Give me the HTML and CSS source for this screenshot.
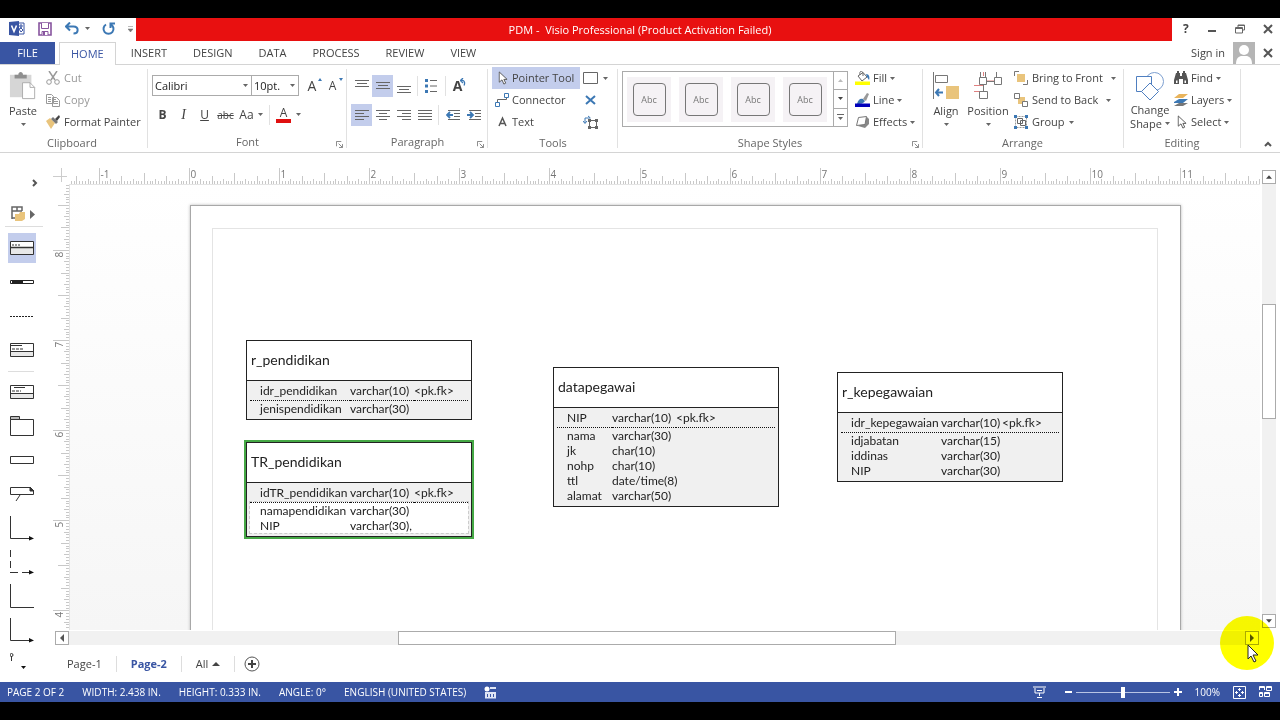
FILE: index.html
```
<!DOCTYPE html>
<html lang="en">
  <head>
    <meta charset="UTF-8" />
    <meta name="viewport" content="width=device-width, initial-scale=1.0" />
    <title>PDM - Visio Professional</title>
    <link rel="stylesheet" href="styles.css">
  </head>
  <body>
    <!-- shared shapes -->
    <svg class="sprite" aria-hidden="true">
      <symbol id="down" viewBox="0 0 5 3"><path d="M0 0h5L2.500 3z" fill="currentColor" /></symbol>
      <symbol id="launcher" viewBox="0 0 8 8"><path d="M.5 6V.5H6M3 3l4 4M7.500 3.500v4h-4" fill="none" stroke="#777" /></symbol>
      <symbol id="close" viewBox="0 0 10 10"><path d="M1 1l8 8M9 1L1 9" fill="none" stroke="#555" stroke-width="2" /></symbol>
      <symbol id="arrow" viewBox="0 0 10 15"><path d="M1 1v11l3-2.500 2 4.500 2-1-2-4h3.500z" fill="#fff" stroke="#555" /></symbol>
    </svg>

    <header class="titlebar">
      <div class="quick">
        <svg class="visio" width="16" height="15" viewBox="0 0 16 15"><path d="M9 2h6v11H9z" fill="#fff" stroke="#3955a3" /><path d="M11 4h2v2h-2zM10 8l2-1 2 2-2 2zM12 6v2" fill="none" stroke="#3955a3" /><path d="M0 1l10-1v15L0 14z" fill="#3955a3" /><path d="M2.500 4.500L5 10.500l2.500-6" fill="none" stroke="#fff" stroke-width="1.600" /></svg>
        <button class="plain" aria-label="Save"><svg width="14" height="14" viewBox="0 0 14 14"><path d="M1 1h12v12H1z" fill="none" stroke="#87549e" stroke-width="1.600" /><path d="M3.500 1v5.500h7V1M4 13V9.500h6V13" fill="#fff" stroke="#87549e" /><path d="M5 10h2v3H5z" fill="#87549e" /></svg></button>
        <button class="plain" aria-label="Undo"><svg width="14" height="13" viewBox="0 0 14 13"><path d="M1 4.500h7.500c5.500 0 5.500 7 0 7M5 .5l-4 4 4 4" fill="none" stroke="#3c78b4" stroke-width="2" /></svg><svg class="tri" width="5" height="3"><use href="#down" /></svg></button>
        <button class="plain" aria-label="Repeat"><svg width="13" height="13" viewBox="0 0 13 13"><path d="M4 2.500a5 5 0 1 0 5 0M8.500 6V1.500H13" fill="none" stroke="#3c78b4" stroke-width="2" /></svg></button>
        <button class="plain" aria-label="Customize"><svg width="5" height="6" viewBox="0 0 5 6"><path d="M0 .5h5M0 3h5L2.500 6z" fill="#777" stroke="#777" stroke-width=".5" /></svg></button>
      </div>
      <h1 class="title">PDM -&nbsp; Visio Professional (Product Activation Failed)</h1>
      <div class="window-buttons">
        <button class="plain help" aria-label="Help">?</button>
        <button class="plain" aria-label="Minimize"><svg width="10" height="10" viewBox="0 0 10 10"><path d="M1 7h8" stroke="#555" stroke-width="2" /></svg></button>
        <button class="plain" aria-label="Restore"><svg width="10" height="10" viewBox="0 0 10 10"><path d="M3 3V1h6.500v5h-2M.5 3.500h7v5.500h-7zM.5 4.500h7M3 1.500h6" fill="none" stroke="#666" /></svg></button>
        <button class="plain" aria-label="Close"><svg width="10" height="10"><use href="#close" /></svg></button>
      </div>
    </header>

    <nav class="tabs">
      <a class="file" href="#">FILE</a>
      <a class="active" href="#">HOME</a>
      <a href="#">INSERT</a>
      <a href="#">DESIGN</a>
      <a href="#">DATA</a>
      <a href="#">PROCESS</a>
      <a href="#">REVIEW</a>
      <a href="#">VIEW</a>
      <div class="account">
        <a href="#">Sign in</a>
        <svg width="22" height="22" viewBox="0 0 22 22"><path d="M0 0h22v22H0z" fill="#b5b5b5" /><circle cx="11" cy="8" r="5" fill="#fff" /><path d="M3 22c0-6 3-8 6-8h4c3 0 6 2 6 8z" fill="#fff" /></svg>
        <button class="plain" aria-label="Close document"><svg width="10" height="10"><use href="#close" /></svg></button>
      </div>
    </nav>

    <div class="ribbon">
      <section class="group clipboard">
        <div class="body">
          <button class="big muted-icon">
            <svg width="28" height="30" viewBox="0 0 28 30"><path d="M0 3h23v24H0z" fill="#d6d6d6" /><path d="M5 7V3h4c0-4 5-4 5 0h4v4z" fill="#8f8f8f" /><path d="M13.500 11.500h8l5 5v12h-13z" fill="#fff" stroke="#aaa" /><path d="M21.500 11.500v5h5" fill="none" stroke="#aaa" /></svg>
            <span>Paste</span><svg class="tri" width="5" height="3"><use href="#down" /></svg>
          </button>
          <div class="rows">
            <button class="tool disabled"><svg width="14" height="14" viewBox="0 0 14 14"><path d="M3 0l6 9M11 0L5 9" stroke="#999" stroke-width="1.500" /><circle cx="3" cy="11" r="2.300" fill="none" stroke="#999" /><circle cx="11" cy="11" r="2.300" fill="none" stroke="#999" /></svg>Cut</button>
            <button class="tool disabled"><svg width="14" height="14" viewBox="0 0 14 14"><path d="M.5 1.500h5l2 2v7h-7zM6.500 4.500h4l3 3v6h-7z" fill="#fff" stroke="#999" /><path d="M2 4.500h3M2 6.500h3M2 8.500h3M8 8.500h4M8 10.500h4M8 6.500h2" stroke="#999" /></svg>Copy</button>
            <button class="tool"><svg width="14" height="14" viewBox="0 0 14 14"><path d="M0 6l4-3 5 5-4 6z" fill="#e9c47c" /><path d="M5 4l2-2 5 5-2 2z" fill="#777" /><path d="M9 4l4-4 1 2-3 4z" fill="#444" /></svg>Format Painter</button>
          </div>
        </div>
        <h2>Clipboard</h2>
      </section>

      <section class="group font">
        <div class="body lines">
          <div class="line">
            <label class="combo family"><select aria-label="Font"><option>Calibri</option></select><svg class="tri" width="5" height="3"><use href="#down" /></svg></label>
            <label class="combo size"><select aria-label="Font size"><option>10pt.</option></select><svg class="tri" width="5" height="3"><use href="#down" /></svg></label>
            <button class="letter grow" aria-label="Increase font size">A<svg width="4" height="3" viewBox="0 0 4 3"><path d="M0 3h4L2 0z" fill="#3c78b4" /></svg></button>
            <button class="letter shrink" aria-label="Decrease font size">A<svg width="4" height="3" viewBox="0 0 4 3"><path d="M0 0h4L2 3z" fill="#3c78b4" /></svg></button>
          </div>
          <div class="line">
            <button class="letter"><b>B</b></button>
            <button class="letter serif"><i>I</i></button>
            <button class="letter"><u>U</u></button>
            <button class="letter small"><s>abc</s></button>
            <button class="letter case">Aa<svg class="tri" width="5" height="3"><use href="#down" /></svg></button>
            <span class="rule"></span>
            <button class="letter color"><span>A</span><svg class="tri" width="5" height="3"><use href="#down" /></svg></button>
          </div>
        </div>
        <h2>Font</h2>
        <svg class="launcher" width="7" height="7"><use href="#launcher" /></svg>
      </section>

      <section class="group paragraph">
        <div class="body lines">
          <div class="line">
            <button class="ico" aria-label="Align top"><svg width="14" height="14" viewBox="0 0 14 14"><path d="M0 1.500h14M2 4.500h10M0 7.500h14" stroke="#666" /></svg></button>
            <button class="ico on" aria-label="Align middle"><svg width="14" height="14" viewBox="0 0 14 14"><path d="M0 3.500h14M2 6.500h10M0 9.500h14" stroke="#666" /></svg></button>
            <button class="ico" aria-label="Align bottom"><svg width="14" height="14" viewBox="0 0 14 14"><path d="M0 7.500h14M2 10.500h10M0 13.500h14" stroke="#666" /></svg></button>
            <span class="rule"></span>
            <button class="ico" aria-label="Bullets"><svg width="14" height="14" viewBox="0 0 14 14"><path d="M5 1.500h7M5 7h7M5 12.500h7" stroke="#666" /><path d="M0 0h3v3H0zM0 5.500h3v3H0zM0 11h3v3H0z" fill="#3c78b4" /></svg></button>
            <span class="rule"></span>
            <button class="letter rotate" aria-label="Rotate text"><b>A</b><svg width="6" height="8" viewBox="0 0 6 8"><path d="M1 2.500c4-1 4 3 3 5M3 0L.5 2.500 3 5" fill="none" stroke="#3c78b4" stroke-width="1.300" /></svg></button>
          </div>
          <div class="line">
            <button class="ico on" aria-label="Align left"><svg width="14" height="14" viewBox="0 0 14 14"><path d="M0 2.500h14M0 5.500h9M0 8.500h14M0 11.500h9" stroke="#666" /></svg></button>
            <button class="ico" aria-label="Center"><svg width="14" height="14" viewBox="0 0 14 14"><path d="M0 2.500h14M3 5.500h8M0 8.500h14M3 11.500h8" stroke="#666" /></svg></button>
            <button class="ico" aria-label="Align right"><svg width="14" height="14" viewBox="0 0 14 14"><path d="M0 2.500h14M5 5.500h9M0 8.500h14M5 11.500h9" stroke="#666" /></svg></button>
            <button class="ico" aria-label="Justify"><svg width="14" height="14" viewBox="0 0 14 14"><path d="M0 2.500h14M0 5.500h14M0 8.500h14M0 11.500h14" stroke="#666" /></svg></button>
            <span class="rule"></span>
            <button class="ico" aria-label="Decrease indent"><svg width="14" height="14" viewBox="0 0 14 14"><path d="M2 2.500h12M8 5.500h6M8 8.500h6M2 11.500h12" stroke="#666" /><path d="M7 7H1M4 4L1 7l3 3" fill="none" stroke="#3c78b4" stroke-width="1.800" /></svg></button>
            <button class="ico" aria-label="Increase indent"><svg width="14" height="14" viewBox="0 0 14 14"><path d="M2 2.500h12M8 5.500h6M8 8.500h6M2 11.500h12" stroke="#666" /><path d="M0 7h6M3 4l3 3-3 3" fill="none" stroke="#3c78b4" stroke-width="1.800" /></svg></button>
          </div>
        </div>
        <h2>Paragraph</h2>
        <svg class="launcher" width="7" height="7"><use href="#launcher" /></svg>
      </section>

      <section class="group tools">
        <div class="body">
          <div class="rows">
            <button class="tool on"><svg width="14" height="14" viewBox="-3 0 14 15"><use href="#arrow" width="10" height="15" /></svg>Pointer Tool</button>
            <button class="tool"><svg width="14" height="14" viewBox="0 0 14 14"><path d="M.5 9.500h4v4h-4zM9.500.5h4v4h-4z" fill="#fff" stroke="#3c78b4" /><path d="M2.500 9V6.500h9V5" fill="none" stroke="#666" /></svg>Connector</button>
            <button class="tool"><svg width="14" height="14" viewBox="0 0 14 14"><path d="M4 11L7.500 3 11 11M5 8.500h5" fill="none" stroke="#555" stroke-width="1.500" /></svg>Text</button>
          </div>
          <div class="rows shapes-col">
            <button class="tool" aria-label="Rectangle"><svg width="15" height="12" viewBox="0 0 15 12"><path d="M.5.5h14v11H.5z" fill="#fff" stroke="#666" /></svg><svg class="tri" width="5" height="3"><use href="#down" /></svg></button>
            <button class="tool" aria-label="Connection point"><svg width="15" height="10" viewBox="0 0 15 10"><path d="M3 1l9 8M12 1L3 9" stroke="#3c78b4" stroke-width="2" /></svg></button>
            <button class="tool" aria-label="Text block"><svg width="15" height="14" viewBox="0 0 15 14"><path d="M6.500 5.500h7v7h-7z" fill="none" stroke="#666" /><path d="M5 4h3v3H5zM12 4h3v3h-3zM5 11h3v3H5zM12 11h3v3h-3z" fill="#666" /><path d="M2 8V3h5M0 6l2 2.500L4 6M5 1l2.500 2" fill="none" stroke="#3c78b4" /></svg></button>
          </div>
        </div>
        <h2>Tools</h2>
      </section>

      <section class="group styles">
        <div class="body">
          <div class="gallery">
            <button><span>Abc</span></button>
            <button><span>Abc</span></button>
            <button><span>Abc</span></button>
            <button><span>Abc</span></button>
            <div class="gallery-nav">
              <button aria-label="Previous styles"><svg class="up dim" width="5" height="3"><use href="#down" /></svg></button>
              <button aria-label="Next styles"><svg width="5" height="3"><use href="#down" /></svg></button>
              <button aria-label="More styles"><svg width="7" height="7" viewBox="0 0 7 7"><path d="M0 .5h7" stroke="#666" /><path d="M1 3h5L3.500 6z" fill="#666" /></svg></button>
            </div>
          </div>
          <div class="rows">
            <button class="tool"><svg width="15" height="14" viewBox="0 0 15 14"><path d="M3 5l5-3.500L12 6l-5 4z" fill="#fff" stroke="#666" /><path d="M5 4c-1-4 2-5 3-2v3" fill="none" stroke="#666" /><path d="M11 3c3 0 4 3 3 6l-2-3z" fill="#3c78b4" /><path d="M0 10.500h15V14H0z" fill="#ff0" /></svg>Fill<svg class="tri" width="5" height="3"><use href="#down" /></svg></button>
            <button class="tool"><svg width="15" height="14" viewBox="0 0 15 14"><path d="M2 11c1-4 3-6 6-5l2 2c-2 3-5 3-8 3z" fill="#3c78b4" /><path d="M8 6l4-6 2 1-3 7z" fill="#999" /><path d="M0 10.500h15V14H0z" fill="#00b" /></svg>Line<svg class="tri" width="5" height="3"><use href="#down" /></svg></button>
            <button class="tool"><svg width="15" height="14" viewBox="0 0 15 14"><path d="M3 11l7 2 4-4V4l-2-2z" fill="#888" /><path d="M3.500 2.500l8-1-1.500 8-8.500 1z" fill="#fff" stroke="#777" /></svg>Effects<svg class="tri" width="5" height="3"><use href="#down" /></svg></button>
          </div>
        </div>
        <h2>Shape Styles</h2>
        <svg class="launcher" width="7" height="7"><use href="#launcher" /></svg>
      </section>

      <section class="group arrange">
        <div class="body">
          <button class="big">
            <svg width="28" height="28" viewBox="0 0 28 28"><path d="M1.500 0v27" stroke="#777" /><path d="M3.500 3.500h12v7h-12z" fill="#fff" stroke="#777" /><path d="M14 14h13v13H14z" fill="#e9c47c" /><path d="M11 20.500H4M7 17l-3 3.500L7 24" fill="none" stroke="#3c78b4" stroke-width="2" /></svg>
            <span>Align</span><svg class="tri" width="5" height="3"><use href="#down" /></svg>
          </button>
          <button class="big">
            <svg width="28" height="28" viewBox="0 0 28 28"><path d="M9.500 0v4M13 9h7M9.500 14v4M0 13.500h9.500M0 19.500h6" fill="none" stroke="#e08080" /><path d="M5.500 5.500h7v7h-7zM20.500 5.500h7v7h-7zM5.500 19.500h8v7h-8zM6.500 0v5M11.500 0v5M22.500 0v5M13 9.500h7M9.500 13v6" fill="none" stroke="#777" /></svg>
            <span>Position</span><svg class="tri" width="5" height="3"><use href="#down" /></svg>
          </button>
          <div class="rows">
            <button class="tool wide"><svg width="14" height="14" viewBox="0 0 14 14"><path d="M.5 5V.5H5M9 13.500h4.500V9" fill="none" stroke="#777" /><path d="M3 3h8v8H3z" fill="#e9c47c" /></svg>Bring to Front<svg class="tri" width="5" height="3"><use href="#down" /></svg></button>
            <button class="tool wide"><svg width="14" height="14" viewBox="0 0 14 14"><path d="M4 4h7v7H4z" fill="#e9c47c" /><path d="M.5.5h5v5h-5zM8.500 8.500h5v5h-5z" fill="#fff" stroke="#777" /></svg>Send to Back<svg class="tri" width="5" height="3"><use href="#down" /></svg></button>
            <button class="tool"><svg width="14" height="14" viewBox="0 0 14 14"><path d="M1.500 1.500h11v11h-11z" fill="none" stroke="#999" stroke-dasharray="2 1" /><path d="M3.500 3.500h5v5h-5zM6.500 5.500h5v5h-5z" fill="none" stroke="#666" /><path d="M0 0h3v3H0zM11 0h3v3h-3zM0 11h3v3H0zM11 11h3v3h-3z" fill="#3c78b4" /></svg>Group<svg class="tri" width="5" height="3"><use href="#down" /></svg></button>
          </div>
        </div>
        <h2>Arrange</h2>
      </section>

      <section class="group editing">
        <div class="body">
          <button class="big">
            <svg width="28" height="28" viewBox="0 0 28 28"><circle cx="18.500" cy="9.500" r="9" fill="#fff" stroke="#7d9fd0" /><path d="M.5 4.500h15v15H.5z" fill="#fff" stroke="#4f7fc0" /><path d="M14 11l8.500 8.500L14 28l-8.500-8.500z" fill="#fff" stroke="#4f7fc0" /></svg>
            <span>Change<br>Shape<svg class="tri" width="5" height="3"><use href="#down" /></svg></span>
          </button>
          <div class="rows">
            <button class="tool"><svg width="14" height="14" viewBox="0 0 14 14"><path d="M2 2h4v3h2V2h4l2 7v4H9V8H5v5H0V9z" fill="#555" /><path d="M3 0h2v2H3zM9 0h2v2H9z" fill="#555" /><path d="M2 9.500h1.500V12H2zM10.500 9.500H12V12h-1.500z" fill="#fff" /></svg>Find<svg class="tri" width="5" height="3"><use href="#down" /></svg></button>
            <button class="tool"><svg width="14" height="14" viewBox="0 0 14 14"><path d="M0 13l5-3h9l-5 3z" fill="#777" /><path d="M0 9l5-3h9l-5 4H0z" fill="#3c78b4" /><path d="M0 5l5-4h9L9 5z" fill="#e9b45c" /></svg>Layers<svg class="tri" width="5" height="3"><use href="#down" /></svg></button>
            <button class="tool"><svg width="14" height="14" viewBox="-3 0 14 15"><use href="#arrow" width="10" height="15" /></svg>Select<svg class="tri" width="5" height="3"><use href="#down" /></svg></button>
          </div>
        </div>
        <h2>Editing</h2>
      </section>
      <button class="plain collapse" aria-label="Collapse ribbon"><svg width="8" height="6" viewBox="0 0 8 6"><path d="M1 5l3-3 3 3" fill="none" stroke="#555" stroke-width="2" /></svg></button>
    </div>

    <main class="workspace">
      <aside class="stencils">
        <button class="plain expand" aria-label="Expand shapes"><svg width="6" height="8" viewBox="0 0 6 8"><path d="M1 1l3 3-3 3" fill="none" stroke="#555" stroke-width="2" /></svg></button>
        <button class="plain more" aria-label="More shapes"><svg width="24" height="16" viewBox="0 0 24 16"><path d="M1 13V1h10v4M1 5h5V1M6 5h5M1 12h3" fill="none" stroke="#666" stroke-width="1.500" /><path d="M4 15V8h4l1-2h5v7l-3 2z" fill="#e9c47c" /><path d="M19 4v9l5-4.500z" fill="#666" /></svg></button>
        <hr>
        <button class="stencil on" aria-label="Entity"><svg viewBox="0 0 24 24"><path d="M.5 5.500h23v13H.5z" fill="#fff" stroke="#333" /><path d="M1 12h22v6H1z" fill="#e8e8e8" /><path d="M0 11.500h24" stroke="#333" stroke-width="1.500" /><path d="M2 9h8" stroke="#333" stroke-dasharray="2 1" /></svg></button>
        <button class="stencil" aria-label="Attribute"><svg viewBox="0 0 24 24"><path d="M.5 10.500h23v3H.5z" fill="#fff" stroke="#222" /><path d="M2 12h11" stroke="#222" stroke-width="2" /></svg></button>
        <button class="stencil" aria-label="Separator"><svg viewBox="0 0 24 24"><path d="M0 12.500h24" stroke="#222" stroke-dasharray="2 1" /></svg></button>
        <button class="stencil" aria-label="View"><svg viewBox="0 0 24 24"><path d="M.5 5.500h23v13H.5z" fill="#fff" stroke="#333" /><path d="M1 14h22v4H1z" fill="#e8e8e8" /><path d="M0 13.500h24M1 7.500h11" stroke="#333" /><path d="M2 11h12" stroke="#333" stroke-dasharray="3 1" /></svg></button>
        <hr class="short">
        <button class="stencil" aria-label="Class"><svg viewBox="0 0 24 24"><path d="M.5 5.500h23v13H.5z" fill="#fff" stroke="#333" /><path d="M1 14h22v4H1z" fill="#e8e8e8" /><path d="M0 13.500h24M4 7.500h11" stroke="#333" /><path d="M2 11h9" stroke="#333" stroke-dasharray="3 1" /></svg></button>
        <button class="stencil" aria-label="Package"><svg viewBox="0 0 24 24"><path d="M.5 5.500h23v16H.5z" fill="#fff" stroke="#333" /><path d="M.5 2.500h9v3h-9z" fill="#bbb" stroke="#333" /></svg></button>
        <button class="stencil" aria-label="Box"><svg viewBox="0 0 24 24"><path d="M.5 8.500h23v7H.5z" fill="#fff" stroke="#333" /></svg></button>
        <button class="stencil" aria-label="Note"><svg viewBox="0 0 24 24"><path d="M.5 5.500h20l3 3v4H.5z" fill="#fff" stroke="#333" /><path d="M20 5v4h4zM10 13l-4 6" fill="#333" stroke="#333" /></svg></button>
        <button class="stencil" aria-label="Relationship"><svg viewBox="0 0 24 24"><path d="M.5 0v22.500h20" fill="none" stroke="#333" /><path d="M19 20l5 2.500-5 2z" fill="#111" /></svg></button>
        <button class="stencil" aria-label="Dashed relationship"><svg viewBox="0 0 24 24"><path d="M.5 0v23M1 22.500h20" fill="none" stroke="#333" stroke-dasharray="7 4" /><path d="M19 20l5 2.500-5 2z" fill="#111" /></svg></button>
        <button class="stencil" aria-label="Line"><svg viewBox="0 0 24 24"><path d="M.5 0v23.500H24" fill="none" stroke="#333" /></svg></button>
        <button class="stencil" aria-label="Arrow"><svg viewBox="0 0 24 24"><path d="M.5 0v22.500h20" fill="none" stroke="#333" /><path d="M19 20l5 2.500-5 2z" fill="#111" /></svg></button>
        <button class="plain pin" aria-label="Scroll shapes"><svg width="16" height="18" viewBox="0 0 16 18"><circle cx="1.500" cy="3" r="1.500" fill="none" stroke="#333" /><path d="M1.500 4v5" stroke="#333" /><path d="M11 14h5l-2.500 3z" fill="#111" /></svg></button>
      </aside>

      <div class="document">
        <div class="drawing">
          <svg class="corner" width="16" height="16" viewBox="0 0 16 16"><path d="M0 8.500h14M8.500 0v14" stroke="#ccc" /></svg>
          <svg class="ruler" id="ruler-x"></svg>
          <svg class="ruler" id="ruler-y"></svg>

          <div class="canvas">
            <div class="sheet">
              <div class="margins"></div>

              <article class="entity r-pendidikan">
                <h3>r_pendidikan</h3>
                <table>
                  <colgroup><col class="name"><col class="type"><col></colgroup>
                  <tbody class="key"><tr><td>idr_pendidikan</td><td>varchar(10)</td><td>&lt;pk.fk&gt;</td></tr></tbody>
                  <tbody><tr><td>jenispendidikan</td><td>varchar(30)</td><td></td></tr></tbody>
                </table>
              </article>

              <article class="entity tr-pendidikan selected">
                <h3>TR_pendidikan</h3>
                <table>
                  <colgroup><col class="name"><col class="type"><col></colgroup>
                  <tbody class="key"><tr><td>idTR_pendidikan</td><td>varchar(10)</td><td>&lt;pk.fk&gt;</td></tr></tbody>
                  <tbody class="editing-rows">
                    <tr><td>namapendidikan</td><td>varchar(30)</td><td></td></tr>
                    <tr><td>NIP</td><td>varchar(30),</td><td></td></tr>
                  </tbody>
                </table>
              </article>

              <article class="entity datapegawai">
                <h3>datapegawai</h3>
                <table>
                  <colgroup><col class="name"><col class="type"><col></colgroup>
                  <tbody class="key"><tr><td>NIP</td><td>varchar(10)</td><td>&lt;pk.fk&gt;</td></tr></tbody>
                  <tbody>
                    <tr><td>nama</td><td>varchar(30)</td><td></td></tr>
                    <tr><td>jk</td><td>char(10)</td><td></td></tr>
                    <tr><td>nohp</td><td>char(10)</td><td></td></tr>
                    <tr><td>ttl</td><td>date/time(8)</td><td></td></tr>
                    <tr><td>alamat</td><td>varchar(50)</td><td></td></tr>
                  </tbody>
                </table>
              </article>

              <article class="entity r-kepegawaian">
                <h3>r_kepegawaian</h3>
                <table>
                  <colgroup><col class="name"><col class="type"><col></colgroup>
                  <tbody class="key"><tr><td>idr_kepegawaian</td><td>varchar(10)</td><td>&lt;pk.fk&gt;</td></tr></tbody>
                  <tbody>
                    <tr><td>idjabatan</td><td>varchar(15)</td><td></td></tr>
                    <tr><td>iddinas</td><td>varchar(30)</td><td></td></tr>
                    <tr><td>NIP</td><td>varchar(30)</td><td></td></tr>
                  </tbody>
                </table>
              </article>
            </div>
          </div>

          <div class="scroll vertical">
            <button aria-label="Scroll up"><svg class="up" width="6" height="4"><use href="#down" /></svg></button>
            <div class="track"><div class="thumb"></div></div>
            <button aria-label="Scroll down"><svg width="6" height="4"><use href="#down" /></svg></button>
          </div>
          <div class="scroll horizontal">
            <button aria-label="Scroll left"><svg width="4" height="8" viewBox="0 0 4 8"><path d="M4 0v8L0 4z" fill="#555" /></svg></button>
            <div class="track"><div class="thumb"></div></div>
            <button class="right" aria-label="Scroll right"><svg width="4" height="8" viewBox="0 0 4 8"><path d="M0 0v8l4-4z" fill="#555" /></svg>
              <span class="pointer"><svg width="12" height="19" viewBox="0 0 12 19"><path d="M1 1v14l3-3 3 6 2-1-3-6h5z" fill="#fff" stroke="#222" /></svg></span>
            </button>
          </div>
        </div>

        <nav class="pages">
          <a href="#">Page-1</a>
          <a class="current" href="#">Page-2</a>
          <a href="#">All<svg class="up" width="8" height="4" viewBox="0 0 8 4"><path d="M0 0h8L4 4z" fill="#444" /></svg></a>
          <button class="plain" aria-label="Insert page"><svg width="16" height="16" viewBox="0 0 16 16"><circle cx="8" cy="8" r="7" fill="#fff" stroke="#555" /><path d="M4 8h8M8 4v8" stroke="#444" stroke-width="2" /></svg></button>
        </nav>
      </div>
    </main>

    <footer class="status">
      <span>PAGE 2 OF 2</span>
      <span>WIDTH: 2.438 IN.</span>
      <span>HEIGHT: 0.333 IN.</span>
      <span>ANGLE: 0°</span>
      <span>ENGLISH (UNITED STATES)</span>
      <svg width="13" height="13" viewBox="0 0 13 13"><circle cx="3" cy="3" r="2.500" fill="#fff" /><path d="M6 1h6v2H6zM1 6h11v6.500H1z" fill="#dfe5f5" /><path d="M3.500 8v3M6.500 8v3M9.500 8v3" stroke="#3955a3" /></svg>
      <div class="zoom">
        <button class="plain" aria-label="Presentation mode"><svg width="13" height="12" viewBox="0 0 13 12"><path d="M0 1h13M2 2v5h9V2M6.500 7v3M4 11.500h5M4 4.500h5" fill="none" stroke="#fff" /></svg></button>
        <button class="plain" aria-label="Zoom out"><svg width="7" height="8" viewBox="0 0 7 8"><path d="M0 4h7" stroke="#fff" stroke-width="2" /></svg></button>
        <input type="range" aria-label="Zoom" min="0" max="200" value="100">
        <button class="plain" aria-label="Zoom in"><svg width="8" height="8" viewBox="0 0 8 8"><path d="M0 4h8M4 0v8" stroke="#fff" stroke-width="2" /></svg></button>
        <span>100%</span>
        <button class="plain" aria-label="Fit page"><svg width="13" height="13" viewBox="0 0 13 13"><path d="M.5.500h12v12H.5z" fill="none" stroke="#fff" /><path d="M6.500 2v3M6.500 8v3M2 6.500h3M8 6.500h3M5 3.500h3M5 9.500h3M3.500 5v3M9.500 5v3" stroke="#fff" /></svg></button>
        <button class="plain" aria-label="Switch windows"><svg width="13" height="12" viewBox="0 0 13 12"><path d="M.5 4V.5h5V4M7.500.5h5v4h-5zM.5 6.500h3v4h-3zM5.500 6.500h5v4h-5zM0 1.500h6M7 1.500h6M0 7.500h4M5 7.500h6" fill="none" stroke="#fff" /></svg></button>
      </div>
    </footer>

    <script>
      const inch = 90.1; // pixels per inch at 100%

      // tick length for each 1/32 of an inch
      function tickLength(n) {
        if (n % 32 === 0) return 16;
        if (n % 16 === 0) return 11;
        if (n % 8 === 0) return 8;
        if (n % 4 === 0) return 5;
        return 3;
      }

      function drawRuler(id, origin, originValue, step) {
        const ruler = document.getElementById(id);
        const across = id === "ruler-x";
        const size = across ? ruler.clientWidth : ruler.clientHeight;
        const first = Math.ceil((-origin / inch) * 32);
        const last = Math.floor(((size - origin) / inch) * 32);
        let path = "";
        let labels = "";
        for (let n = first; n <= last; n++) {
          const at = Math.round(origin + (n * inch) / 32) + 0.5;
          const start = 16 - tickLength(n);
          path += across ? `M${at} ${start}V16` : `M${start} ${at}H16`;
          if (n % 32 === 0) {
            const value = originValue + (n / 32) * step;
            labels += across
              ? `<text x="${at + 1}" y="10">${value}</text>`
              : `<text transform="translate(10 ${at + 7}) rotate(-90)">${value}</text>`;
          }
        }
        ruler.innerHTML = `<path d="${path}" />${labels}`;
      }

      function drawRulers() {
        drawRuler("ruler-x", 120, 0, 1);
        drawRuler("ruler-y", 66, 8, -1);
      }

      window.addEventListener("resize", drawRulers);
      drawRulers();
    </script>
  </body>
</html>
```
FILE: styles.css
```
* {
  box-sizing: border-box;
}
body {
  margin: 0;
  height: 100vh;
  padding: 18px 0;
  display: flex;
  flex-direction: column;
  background: #000;
  color: #444;
  font-family: "Open Sans", "Noto Sans", sans-serif;
  font-size: 11px;
  line-height: 16px;
  overflow: hidden;
}
button {
  display: flex;
  align-items: center;
  justify-content: center;
  padding: 0;
  border: 0;
  background: none;
  color: inherit;
  font: inherit;
  white-space: nowrap;
}
a {
  color: inherit;
  text-decoration: none;
}
svg {
  flex: none;
}
h1,
h2,
h3 {
  margin: 0;
  font-size: 11px;
  font-weight: normal;
}
.sprite {
  position: absolute;
  width: 0;
  height: 0;
}
.tri {
  color: #666;
}
.up {
  transform: rotate(180deg);
}
.dim {
  color: #bbb;
}

/* title bar */
.titlebar {
  display: flex;
  height: 24px;
  background: #fff;
}
.quick {
  display: flex;
  align-items: center;
  width: 136px;
  padding: 0 3px 3px 9px;
  justify-content: space-between;
}
.quick button {
  gap: 6px;
}
.title {
  flex: 1;
  height: 23px;
  padding-right: 28px;
  background: #e81010;
  color: #fff;
  line-height: 24px;
  text-align: center;
}
.window-buttons {
  display: flex;
  align-items: center;
  justify-content: space-between;
  width: 108px;
  padding: 0 7px 3px 11px;
}
.help {
  font-size: 12px;
  font-weight: bold;
}

/* ribbon tabs */
.tabs {
  display: flex;
  height: 23px;
  background: #fff;
  border-bottom: 1px solid #d4d4d4;
  line-height: 22px;
}
.tabs > a {
  padding: 0 13px;
}
.tabs .file {
  width: 55px;
  margin-right: 4px;
  background: #3955a3;
  color: #fff;
  text-align: center;
}
.tabs .active {
  height: 23px;
  padding: 0 11px;
  margin-right: 2px;
  border: 1px solid #d4d4d4;
  border-bottom: 0;
  background: #fff;
  color: #3955a3;
  line-height: 21px;
}
.account {
  display: flex;
  align-items: center;
  margin-left: auto;
  padding-right: 7px;
}
.account svg {
  margin-left: 8px;
}

/* ribbon */
.ribbon {
  display: flex;
  height: 88px;
  background: #fff;
  border-bottom: 1px solid #d4d4d4;
}
.group {
  position: relative;
  display: flex;
  flex-direction: column;
  padding: 2px 4px 0;
}
.group::after {
  content: "";
  position: absolute;
  top: 4px;
  right: 0;
  bottom: 4px;
  border-right: 1px solid #e1e1e1;
}
.group h2 {
  color: #666;
  line-height: 20px;
  text-align: center;
}
.launcher {
  position: absolute;
  right: 4px;
  bottom: 4px;
}
.body {
  display: flex;
  height: 67px;
}
.clipboard {
  width: 148px;
  padding-left: 0;
}
.font {
  width: 199px;
}
.paragraph {
  width: 141px;
}
.tools {
  width: 130px;
}
.styles {
  width: 305px;
}
.arrange {
  width: 201px;
}
.editing {
  width: 117px;
}
.rows {
  display: flex;
  flex-direction: column;
}
.tool {
  justify-content: flex-start;
  height: 22px;
  gap: 4px;
}
.on {
  background: #c3cdec;
}
.disabled {
  color: #999;
}
.big {
  flex-direction: column;
  justify-content: flex-start;
  width: 42px;
  padding-top: 5px;
}
.big > svg:first-child {
  height: 28px;
  margin-bottom: 3px;
}
.big > .tri {
  margin-top: 4px;
}
.clipboard .big {
  width: 46px;
}
.lines {
  flex-direction: column;
  padding-top: 4px;
}
.line {
  display: flex;
  align-items: center;
  height: 29px;
}
.rule {
  width: 1px;
  height: 20px;
  margin: 0 3px;
  background: #e1e1e1;
}
.letter {
  position: relative;
  width: 21px;
  height: 22px;
  font-size: 12px;
}
.serif {
  font-family: "Liberation Serif", serif;
  font-size: 14px;
}
.small {
  font-size: 10px;
}
.combo {
  position: relative;
  height: 21px;
}
.combo select {
  width: 100%;
  height: 100%;
  padding: 0 2px;
  border: 1px solid #ababab;
  appearance: none;
  background: #fff;
  color: #222;
  font: inherit;
}
.combo .tri {
  position: absolute;
  top: 9px;
  right: 4px;
}
.family {
  width: 101px;
  margin-right: -1px;
}
.size {
  width: 49px;
  margin-right: 2px;
}
.letter.grow {
  font-size: 14px;
}
.grow svg,
.shrink svg {
  position: absolute;
  top: 3px;
  right: 0;
}
.case {
  width: 30px;
  gap: 4px;
}
.color {
  width: 31px;
  gap: 5px;
}
.color span {
  width: 15px;
  border-bottom: 4px solid #e01010;
  line-height: 12px;
}
.ico {
  width: 21px;
  height: 22px;
}
.rotate {
  font-size: 14px;
}
.rotate svg {
  margin: -8px 0 0 -2px;
}
.tools .rows:first-child {
  width: 88px;
}
.tools .rows:first-child .tool {
  gap: 3px;
  padding-left: 3px;
}
.shapes-col {
  padding-left: 3px;
}
.shapes-col .tool {
  gap: 5px;
}
.gallery {
  display: flex;
  align-items: center;
  width: 226px;
  height: 56px;
  margin: 4px 7px 0 1px;
  padding-left: 4px;
  gap: 8px;
  border: 1px solid #ababab;
}
.gallery > button {
  width: 44px;
  height: 45px;
  background: #f5f2f5;
  color: #777;
  font-size: 9px;
}
.gallery > button span {
  width: 33px;
  height: 33px;
  border: 1px solid #777;
  border-radius: 4px;
  line-height: 31px;
}
.gallery-nav {
  display: flex;
  flex-direction: column;
  flex: 1;
  align-self: stretch;
  margin-left: -2px;
  border-left: 1px solid #ababab;
}
.gallery-nav button {
  flex: 1;
}
.gallery-nav button + button {
  border-top: 1px solid #ababab;
}
.styles {
  padding-left: 3px;
}
.styles .tool,
.editing .tool {
  gap: 3px;
}
.arrange {
  padding-left: 2px;
}
.arrange .rows {
  padding-left: 5px;
}
.wide .tri {
  margin-left: 4px;
}
.editing {
  padding-left: 3px;
}
.editing .big {
  width: 46px;
  margin-right: 1px;
}
.editing .big span {
  line-height: 14px;
}
.editing .big span svg {
  margin: 0 0 3px 3px;
}
.collapse {
  align-self: flex-end;
  margin: 0 8px 5px auto;
}

/* work area */
.workspace {
  display: flex;
  flex: 1;
  min-height: 0;
  background: #fff;
}
.stencils {
  display: flex;
  flex-direction: column;
  width: 53px;
  padding: 26px 8px 0;
}
.stencils hr {
  width: 38px;
  margin: 2px 0 6px -3px;
  border: 0;
  border-top: 1px solid #ddd;
}
.stencils .short {
  width: 26px;
  margin: 2px 0 5px;
}
.expand {
  align-self: flex-end;
  margin-right: 7px;
}
.more {
  width: 26px;
  height: 20px;
  margin: 17px 0 0 2px;
}
.stencil {
  flex: none;
  width: 28px;
  height: 30px;
  margin-bottom: 4px;
}
.stencil svg {
  width: 24px;
  height: 24px;
  overflow: visible;
}
.pin {
  width: 16px;
  margin: 3px 0 0 2px;
}
.document {
  display: flex;
  flex: 1;
  flex-direction: column;
  min-width: 0;
}
.drawing {
  display: grid;
  flex: 1;
  grid-template-columns: 16px minmax(0, 1fr) 20px;
  grid-template-rows: 16px minmax(0, 1fr) 16px;
  min-height: 0;
  padding-top: 15px;
}
.ruler {
  width: 100%;
  height: 100%;
  fill: #777;
  font-size: 10px;
}
.ruler path {
  stroke: #c8c8c8;
}
#ruler-y {
  grid-row: 2;
}
.canvas {
  position: relative;
  grid-row: 2;
  overflow: hidden;
  border-top: 1px solid #e4e4e4;
  border-left: 1px solid #e4e4e4;
  background: linear-gradient(#fff, #f6f6f6);
}
.sheet {
  position: absolute;
  top: 20px;
  left: 120px;
  width: 991px;
  height: 766px;
  border: 1px solid #a8a8a8;
  background: #fff;
  box-shadow: 0 0 3px #bbb;
}
.margins {
  position: absolute;
  inset: 22px 22px 22px 21px;
  border: 1px solid #e4e4e4;
}

/* entities on the sheet */
.entity {
  position: absolute;
  width: 226px;
  border: 1px solid #222;
  background: #f0f0f0;
  color: #222;
  font-family: Lato, sans-serif;
}
.entity h3 {
  height: 40px;
  padding-left: 4px;
  border-bottom: 1px solid #222;
  background: #fff;
  font-size: 14px;
  line-height: 38px;
}
.entity table {
  width: 218px;
  margin: 0 3px 3px;
  border-collapse: collapse;
  table-layout: fixed;
  font-size: 12px;
  line-height: 15px;
}
.entity td {
  padding: 0;
  white-space: nowrap;
}
.entity td:first-child {
  padding-left: 10px;
}
.entity .key td {
  height: 19px;
  border-bottom: 1px dotted #111;
}
.name {
  width: 100px;
}
.type {
  width: 64px;
}
.r-pendidikan {
  top: 134px;
  left: 55px;
}
.tr-pendidikan {
  top: 236px;
  left: 55px;
}
.datapegawai {
  top: 161px;
  left: 362px;
}
.r-kepegawaian {
  top: 166px;
  left: 646px;
}
.datapegawai .name {
  width: 55px;
}
.r-kepegawaian .type {
  width: 61px;
}
.selected {
  outline: 2px solid #45a845;
}
.editing-rows {
  background: #fff;
  outline: 1px dashed #ccc;
}

/* scroll bars */
.scroll {
  display: flex;
}
.scroll button {
  flex: none;
  width: 14px;
  height: 14px;
  border: 1px solid #ababab;
  background: #fff;
}
.track {
  flex: 1;
  background: #f1f1f1;
}
.thumb {
  border: 1px solid #ababab;
  background: #fff;
}
.vertical {
  grid-column: 3;
  grid-row: 1 / 3;
  flex-direction: column;
  padding: 2px 4px 2px 2px;
}
.vertical .track {
  padding-top: 120px;
}
.vertical .thumb {
  height: 115px;
}
.horizontal {
  grid-column: 1 / 4;
  padding: 1px 21px 1px 2px;
}
.horizontal .track {
  display: flex;
  justify-content: center;
  padding-right: 20px;
}
.horizontal .thumb {
  width: 498px;
}
.scroll .right {
  position: relative;
}
.right::after {
  content: "";
  position: absolute;
  top: -16px;
  left: -26px;
  width: 54px;
  height: 54px;
  border-radius: 50%;
  background: #ff0;
  mix-blend-mode: multiply;
}
.pointer {
  position: absolute;
  z-index: 2;
  top: 12px;
  left: 1px;
}

/* page tabs */
.pages {
  display: flex;
  align-items: center;
  height: 36px;
}
.pages a {
  padding: 0 14px;
  border-right: 1px solid #ddd;
}
.pages .up {
  margin: 0 0 2px 4px;
}
.pages button {
  margin-left: 9px;
}
.current {
  color: #3955a3;
  font-weight: bold;
}

/* status bar */
.status {
  display: flex;
  align-items: center;
  height: 20px;
  padding: 0 8px 0 7px;
  gap: 18px;
  background: #3955a3;
  color: #fff;
  font-size: 10px;
}
.zoom {
  display: flex;
  align-items: center;
  margin-left: auto;
}
.zoom > * {
  margin-left: 13px;
}
.zoom button:nth-child(2) {
  margin-left: 19px;
}
.zoom input {
  width: 94px;
  height: 12px;
  margin: 0 0 0 4px;
  appearance: none;
  background: linear-gradient(#b8c4e4, #b8c4e4) center / 100% 1px no-repeat;
}
.zoom input::-webkit-slider-thumb {
  width: 4px;
  height: 11px;
  appearance: none;
  background: #fff;
}
.zoom input + button {
  margin-left: 4px;
}
```
